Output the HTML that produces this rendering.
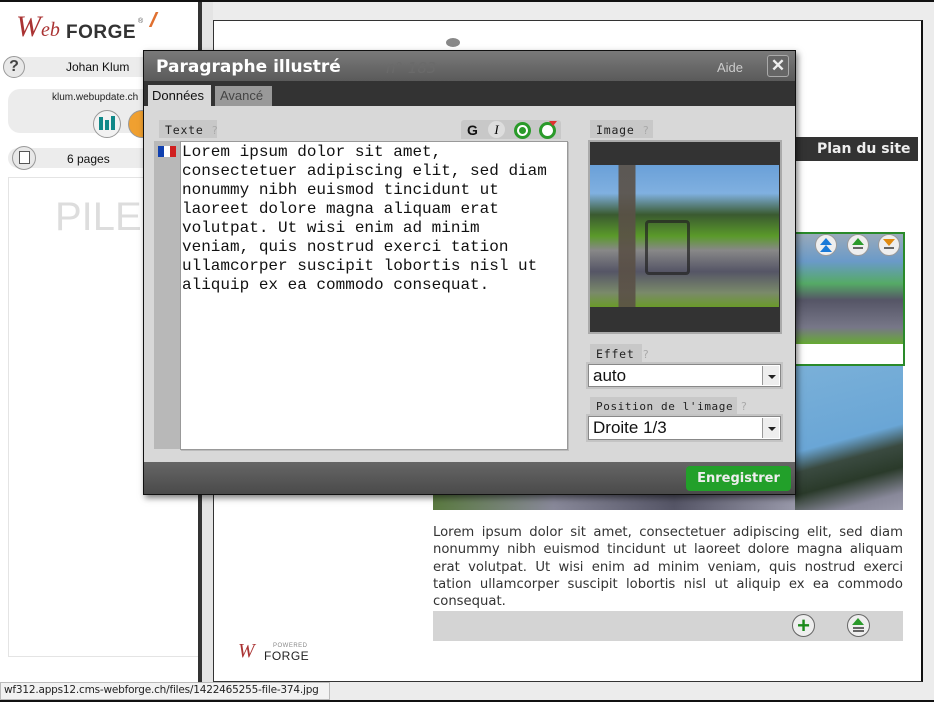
<!DOCTYPE html>
<html><head><meta charset="utf-8"><style>
*{margin:0;padding:0;box-sizing:border-box}
body{width:934px;height:702px;overflow:hidden;background:#ececec;position:relative;font-family:"Liberation Sans",sans-serif}
.a{position:absolute;white-space:nowrap}
.circ{position:absolute;border-radius:50%;border:1px solid #999;background:#e8e8e8}
.lbl{position:absolute;white-space:nowrap;background:#c8c8c8;font-family:"DejaVu Sans Mono","Liberation Mono",monospace;font-size:11.5px;color:#222;padding:3px 6px;letter-spacing:0.8px}
.lbl i{color:#aaa;font-style:normal;font-size:11px}
.sel{position:absolute;background:#fff;border:1px solid #888;font-size:17px;color:#111;padding:1px 4px;box-shadow:0 0 0 2px #c4c4c4}
.sel b{position:absolute;right:1px;top:1px;bottom:1px;width:17px;background:#eee;border-left:1px solid #999}
.sel b:after{content:"";position:absolute;left:5px;top:9px;border:4px solid transparent;border-top:4px solid #222}
</style></head><body>
<div class="a" style="left:0;top:0;width:199px;height:702px;background:#fff;border-top:2px solid #111"></div>
<div class="a" style="left:198px;top:0;width:4px;height:702px;background:#333"></div>
<div class="a" style="left:202px;top:0;width:11px;height:702px;background:#e4e4e4"></div>
<div class="a" style="left:0;top:0;width:934px;height:2px;background:#111"></div>
<div class="a" style="left:16px;top:10px;font-family:'Liberation Serif',serif;font-style:italic;font-size:30px;color:#a33;">W<span style="font-size:20px">eb</span></div>
<div class="a" style="left:66px;top:22px;font-size:19px;font-weight:bold;color:#333;letter-spacing:0.5px">FORGE</div>
<div class="a" style="left:138px;top:18px;font-size:7px;color:#555">®</div>
<div class="a" style="left:150px;top:10px;font-size:20px;color:#e07030;font-style:italic;letter-spacing:-5px">///</div>
<div class="a" style="left:8px;top:57px;width:190px;height:20px;background:#ececec;border-radius:10px"></div>
<div class="circ" style="left:3px;top:56px;width:22px;height:22px;text-align:center;font-weight:bold;color:#444;font-size:16px;line-height:20px">?</div>
<div class="a" style="left:66px;top:60px;font-size:12px;color:#111">Johan Klum</div>
<div class="a" style="left:8px;top:89px;width:190px;height:44px;background:#ececec;border-radius:12px"></div>
<div class="a" style="left:52px;top:92px;font-size:10px;color:#222">klum.webupdate.ch</div>
<div class="circ" style="left:93px;top:110px;width:28px;height:28px;background:#f2f2f2"></div>
<div class="a" style="left:99px;top:117px;width:4px;height:13px;background:#188"></div>
<div class="a" style="left:105px;top:120px;width:4px;height:10px;background:#188"></div>
<div class="a" style="left:111px;top:116px;width:4px;height:14px;background:#188"></div>
<div class="circ" style="left:128px;top:110px;width:28px;height:28px;background:#f0a030"></div>
<div class="a" style="left:8px;top:148px;width:190px;height:20px;background:#ececec;border-radius:10px"></div>
<div class="circ" style="left:12px;top:146px;width:24px;height:24px"></div>
<div class="a" style="left:19px;top:151px;width:11px;height:13px;border:1px solid #555;background:#fff"></div>
<div class="a" style="left:67px;top:152px;font-size:12px;color:#111">6 pages</div>
<div class="a" style="left:8px;top:177px;width:190px;height:480px;border:1px solid #e4e4e4;border-right:none"></div>
<div class="a" style="left:55px;top:195px;font-size:40px;color:#ddd">PILE</div>

<div class="a" style="left:213px;top:20px;width:710px;height:662px;background:#fff;border:1px solid #333;border-right:2px solid #111"></div>
<div class="a" style="left:230px;top:44px;font-size:34px;font-weight:bold;color:#bbb;letter-spacing:3px">NOTRE</div>
<div class="a" style="left:446px;top:38px;width:14px;height:9px;border-radius:50%;background:#888"></div>
<div class="a" style="left:795px;top:137px;width:123px;height:24px;background:#333;color:#eee;font-weight:bold;font-size:14px;font-family:'DejaVu Sans',sans-serif;line-height:24px;padding-left:22px">Plan du site</div>
<div class="a" style="left:795px;top:232px;width:110px;height:134px;border:2px solid #2a8a2a;border-left:none;background:#fff"></div>
<div class="a" style="left:795px;top:234px;width:108px;height:110px;background:linear-gradient(180deg,#9ab 0%,#6a9ac8 25%,#5a6 45%,#556 60%,#778 85%,#6a3 100%)"></div>
<div class="circ" style="left:815px;top:234px;width:22px;height:22px;background:#eee"></div><div class="a" style="left:820px;top:238px;border:6px solid transparent;border-bottom:7px solid #1a7ad8;border-top:0"></div><div class="a" style="left:820px;top:245px;border:6px solid transparent;border-bottom:7px solid #1a7ad8;border-top:0"></div>
<div class="circ" style="left:847px;top:234px;width:22px;height:22px;background:#eee"></div><div class="a" style="left:852px;top:238px;border:6px solid transparent;border-bottom:7px solid #2a9a2a;border-top:0"></div><div class="a" style="left:853px;top:247px;width:10px;height:2px;background:#666"></div>
<div class="circ" style="left:878px;top:234px;width:22px;height:22px;background:#eee"></div><div class="a" style="left:883px;top:239px;border:6px solid transparent;border-top:7px solid #e08a10;border-bottom:0"></div><div class="a" style="left:884px;top:247px;width:10px;height:2px;background:#666"></div>
<div class="a" style="left:795px;top:366px;width:108px;height:144px;background:linear-gradient(165deg,#7ab0d8 0%,#6aa6d6 50%,#3a4a40 62%,#2a3a2a 75%,#889 90%,#99a 100%)"></div>
<div class="a" style="left:433px;top:494px;width:362px;height:16px;background:linear-gradient(90deg,#5a7a40,#889,#556,#99a)"></div>
<div class="a" style="left:433px;top:524px;width:470px;white-space:normal;font-family:'DejaVu Sans',sans-serif;font-size:13.2px;line-height:17.3px;color:#333;text-align:justify">Lorem ipsum dolor sit amet, consectetuer adipiscing elit, sed diam nonummy nibh euismod tincidunt ut laoreet dolore magna aliquam erat volutpat. Ut wisi enim ad minim veniam, quis nostrud exerci tation ullamcorper suscipit lobortis nisl ut aliquip ex ea commodo consequat.</div>
<div class="a" style="left:433px;top:611px;width:470px;height:30px;background:#d4d4d4"></div>
<div class="circ" style="left:792px;top:614px;width:23px;height:23px;border-color:#666;background:#eee;color:#1a8a1a;font-weight:bold;font-size:22px;text-align:center;line-height:21px">+</div>
<div class="circ" style="left:847px;top:614px;width:23px;height:23px;border-color:#666;background:#eee"></div><div class="a" style="left:852px;top:618px;border:6px solid transparent;border-bottom:7px solid #2a9a2a;border-top:0"></div><div class="a" style="left:853px;top:627px;width:11px;height:2px;background:#666"></div><div class="a" style="left:853px;top:630px;width:11px;height:2px;background:#666"></div>
<div class="a" style="left:238px;top:640px;font-family:'Liberation Serif',serif;font-style:italic;font-size:20px;color:#a33">W</div>
<div class="a" style="left:264px;top:649px;font-size:12px;color:#222;letter-spacing:0.5px">FORGE</div>
<div class="a" style="left:273px;top:643px;font-size:6px;color:#888;letter-spacing:0.5px">POWERED</div>

<div class="a" style="left:143px;top:50px;width:653px;height:445px;border:1px solid #111;box-shadow:2px 3px 6px rgba(0,0,0,.5);background:#d8d8d8"></div>
<div class="a" style="left:144px;top:51px;width:651px;height:30px;background:linear-gradient(180deg,#7a7a7a,#5a5a5a)"></div>
<div class="a" style="left:156px;top:57px;font-family:'DejaVu Sans',sans-serif;font-weight:bold;font-size:17px;color:#fff">Paragraphe illustré</div>
<div class="a" style="left:386px;top:59px;font-family:'DejaVu Sans',sans-serif;font-style:italic;font-size:15px;color:#6a6a6a">n° 183</div>
<div class="a" style="left:717px;top:60px;font-size:13px;color:#ccc">Aide</div>
<div class="a" style="left:767px;top:55px;width:22px;height:22px;border:1px solid #aaa;border-radius:3px;background:#666;color:#eee;font-weight:bold;font-size:17px;text-align:center;line-height:20px">✕</div>
<div class="a" style="left:144px;top:81px;width:651px;height:25px;background:#333"></div>
<div class="a" style="left:148px;top:85px;width:63px;height:21px;background:#d8d8d8;font-size:13px;color:#111;padding:3px 0 0 4px">Données</div>
<div class="a" style="left:215px;top:86px;width:57px;height:20px;background:#999;font-size:13px;color:#444;padding:2px 0 0 5px">Avancé</div>
<div class="lbl" style="left:159px;top:120px;width:58px;height:18px">Texte <i>?</i></div>
<div class="a" style="left:461px;top:120px;width:100px;height:19px;background:#c8c8c8;border-radius:3px 3px 0 0"></div>
<div class="a" style="left:467px;top:122px;font-weight:bold;font-size:14px;color:#111">G</div>
<div class="circ" style="left:488px;top:121px;width:17px;height:17px;border:none;background:#ddd;font-style:italic;font-size:13px;text-align:center;line-height:17px;font-family:'Liberation Serif',serif">I</div>
<div class="circ" style="left:514px;top:122px;width:17px;height:17px;border:3px solid #2a9a2a;background:#fff"></div><div class="a" style="left:519px;top:127px;width:7px;height:7px;border-radius:50%;background:#2a9a2a"></div>
<div class="circ" style="left:539px;top:122px;width:17px;height:17px;border:3px solid #2a9a2a;background:#fff"></div><div class="a" style="left:549px;top:121px;border:4px solid transparent;border-top:5px solid #e03030"></div>
<div class="a" style="left:154px;top:141px;width:26px;height:308px;background:#b8b8b8"></div>
<div class="a" style="left:158px;top:146px;width:18px;height:11px;background:linear-gradient(90deg,#1040b0 33%,#fff 33% 66%,#d02020 66%)"></div>
<div class="a" style="left:180px;top:141px;width:388px;height:309px;background:#fff;border:1px solid #999;box-shadow:1px 1px 0 #bbb"></div>
<div class="a" style="left:182px;top:143px;width:384px;font-family:'Liberation Mono',monospace;font-size:16px;line-height:19px;color:#111;white-space:pre">Lorem ipsum dolor sit amet,
consectetuer adipiscing elit, sed diam
nonummy nibh euismod tincidunt ut
laoreet dolore magna aliquam erat
volutpat. Ut wisi enim ad minim
veniam, quis nostrud exerci tation
ullamcorper suscipit lobortis nisl ut
aliquip ex ea commodo consequat.</div>
<div class="lbl" style="left:590px;top:120px;width:63px;height:18px">Image <i>?</i></div>
<div class="a" style="left:588px;top:140px;width:194px;height:194px;background:#333;border:2px solid #aaa"></div>
<div class="a" style="left:590px;top:165px;width:189px;height:142px;background:linear-gradient(90deg,rgba(70,60,50,.0) 0 15%,rgba(90,80,70,.9) 15% 24%,rgba(0,0,0,0) 24%),linear-gradient(180deg,#6aa0d8 0%,#80b0e0 20%,#3a5a30 35%,#5a9a2a 50%,#888 60%,#556 75%,#7a8a6a 90%,#6a9a2a 100%)"></div>
<div class="a" style="left:645px;top:220px;width:45px;height:55px;border:3px solid #222;border-radius:4px;opacity:.7"></div>
<div class="lbl" style="left:590px;top:344px;width:52px;height:18px">Effet <i>?</i></div>
<div class="sel" style="left:588px;top:364px;width:193px;height:23px">auto<b></b></div>
<div class="lbl" style="left:590px;top:397px;width:147px;height:18px;font-size:11px;letter-spacing:0.6px">Position de l'image <i>?</i></div>
<div class="sel" style="left:588px;top:416px;width:193px;height:24px">Droite 1/3<b></b></div>
<div class="a" style="left:144px;top:462px;width:651px;height:32px;background:linear-gradient(180deg,#666,#4a4a4a)"></div>
<div class="a" style="left:686px;top:466px;width:105px;height:25px;background:#22a02a;border-radius:4px;color:#eee;font-family:'DejaVu Sans',sans-serif;font-weight:bold;font-size:13px;text-align:center;line-height:25px">Enregistrer</div>

<div class="a" style="left:0;top:682px;width:330px;height:18px;overflow:hidden;background:#f2f2f2;border:1px solid #bbb;font-family:'DejaVu Sans',sans-serif;font-size:10.5px;letter-spacing:-0.2px;color:#222;padding:1px 0 0 3px">wf312.apps12.cms-webforge.ch/files/1422465255-file-374.jpg</div>
<div class="a" style="left:0;top:700px;width:934px;height:2px;background:#111"></div>
</body></html>
